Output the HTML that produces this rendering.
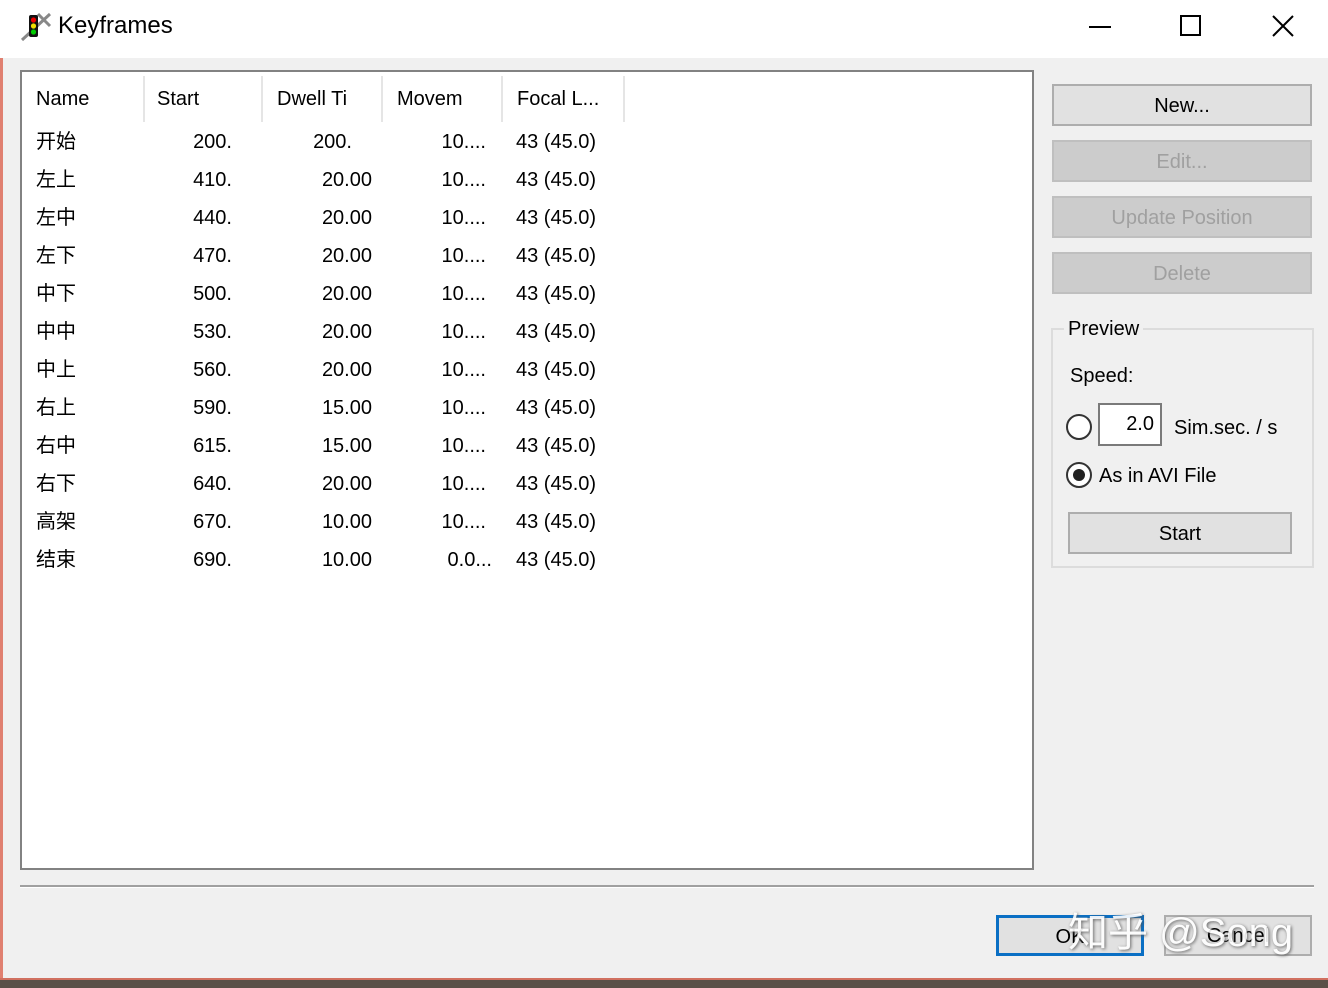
<!DOCTYPE html>
<html><head><meta charset="utf-8"><style>
*{margin:0;padding:0;box-sizing:border-box}
body{width:1328px;height:988px;background:#f0f0f0;position:relative;overflow:hidden;font-family:"Liberation Sans","Noto Sans CJK SC",sans-serif;font-size:20px;color:#000}
.abs{position:absolute}
.title{left:0;top:0;width:1328px;height:58px;background:#fff}
.btn{position:absolute;background:#e1e1e1;border:2px solid #adadad;text-align:center;font-size:20px}
.dis{color:#a0a0a0;border-color:#bfbfbf;background:#cccccc}
.list{left:20px;top:70px;width:1014px;height:800px;background:#fff;border:2px solid #828282}
.hd{position:absolute;top:4px;height:46px;border-right:2px solid #e5e5e5;padding:12px 0 0 14px}
.row{position:absolute;left:0;height:38px;width:620px}
.row span{position:absolute;top:0;line-height:24px;height:24px}
</style></head><body>
<div class="abs" style="left:0;top:0;width:3px;height:980px;background:#e08070"></div>
<div class="abs title">
 <svg class="abs" style="left:20px;top:12px" width="32" height="30" viewBox="0 0 32 30">
  <line x1="2" y1="28" x2="30" y2="2" stroke="#888" stroke-width="3"/>
  <line x1="18" y1="2" x2="30" y2="14" stroke="#888" stroke-width="3"/>
  <rect x="9" y="3" width="9" height="22" rx="2" fill="#111"/>
  <circle cx="13.5" cy="8" r="2.6" fill="#e00"/><circle cx="13.5" cy="14" r="2.6" fill="#ed0"/><circle cx="13.5" cy="20" r="2.6" fill="#0c0"/>
 </svg>
 <div class="abs" style="left:58px;top:12px;font-size:24px">Keyframes</div>
 <div class="abs" style="left:1089px;top:26px;width:22px;height:2px;background:#000"></div>
 <div class="abs" style="left:1180px;top:15px;width:21px;height:21px;border:2px solid #000"></div>
 <svg class="abs" style="left:1272px;top:15px" width="22" height="22"><path d="M1 1L21 21M21 1L1 21" stroke="#000" stroke-width="2"/></svg>
</div>
<div class="abs list">
 <div class="hd" style="left:0;width:123px">Name</div>
 <div class="hd" style="left:121px;width:120px">Start</div>
 <div class="hd" style="left:241px;width:120px">Dwell Ti</div>
 <div class="hd" style="left:361px;width:120px">Movem</div>
 <div class="hd" style="left:481px;width:122px">Focal L...</div>
 <div id="rows"></div>
</div>
<script>
var d=[["开始","200.","200.","10...."],["左上","410.","20.00","10...."],["左中","440.","20.00","10...."],["左下","470.","20.00","10...."],["中下","500.","20.00","10...."],["中中","530.","20.00","10...."],["中上","560.","20.00","10...."],["右上","590.","15.00","10...."],["右中","615.","15.00","10...."],["右下","640.","20.00","10...."],["高架","670.","10.00","10...."],["结束","690.","10.00","0.0..."]];
var h="";d.forEach(function(r,i){var t=58+i*38;h+='<div class="row" style="top:'+t+'px"><span style="left:14px">'+r[0]+'</span><span style="right:410px">'+r[1]+'</span><span style="right:270px;'+(r[2]=="200."?'right:290px':'')+'">'+r[2]+'</span><span style="right:156px;'+(r[3]=="0.0..."?'right:150px':'')+'">'+r[3]+'</span><span style="left:494px">43 (45.0)</span></div>'});
document.getElementById("rows").innerHTML=h;
</script>
<div class="btn" style="left:1052px;top:84px;width:260px;height:42px;line-height:40px">New...</div>
<div class="btn dis" style="left:1052px;top:140px;width:260px;height:42px;line-height:40px">Edit...</div>
<div class="btn dis" style="left:1052px;top:196px;width:260px;height:42px;line-height:40px">Update Position</div>
<div class="btn dis" style="left:1052px;top:252px;width:260px;height:42px;line-height:40px">Delete</div>
<div class="abs" style="left:1051px;top:328px;width:263px;height:240px;border:2px solid #dcdcdc"></div>
<div class="abs" style="left:1064px;top:318px;background:#f0f0f0;padding:0 4px">Preview</div>
<div class="abs" style="left:1070px;top:365px">Speed:</div>
<div class="abs" style="left:1066px;top:414px;width:26px;height:26px;border:2px solid #333;border-radius:50%;background:#fff"></div>
<div class="abs" style="left:1098px;top:403px;width:64px;height:43px;border:2px solid #7a7a7a;background:#fff;text-align:right;padding:8px 6px 0 0">2.0</div>
<div class="abs" style="left:1174px;top:417px">Sim.sec. / s</div>
<div class="abs" style="left:1066px;top:462px;width:26px;height:26px;border:2px solid #333;border-radius:50%;background:#fff"><div style="margin:5px;width:12px;height:12px;border-radius:50%;background:#222"></div></div>
<div class="abs" style="left:1099px;top:465px">As in AVI File</div>
<div class="btn" style="left:1068px;top:512px;width:224px;height:42px;line-height:40px">Start</div>
<div class="abs" style="left:20px;top:885px;width:1294px;height:2px;background:#a0a0a0"></div>
<div class="abs" style="left:20px;top:887px;width:1294px;height:1px;background:#fff"></div>
<div class="btn" style="left:996px;top:915px;width:148px;height:41px;border:3px solid #0a6fc4;line-height:38px">OK</div>
<div class="btn" style="left:1164px;top:915px;width:148px;height:41px;line-height:39px">Cancel</div>
<div class="abs" style="left:1068px;top:900px;font-size:40px;color:#fff;text-shadow:1px 1px 3px #555;opacity:.9">知乎 @Song</div>
<div class="abs" style="left:0;top:978px;width:1328px;height:10px;background:#5a5048;border-top:2px solid #d07060"></div>
</body></html>
